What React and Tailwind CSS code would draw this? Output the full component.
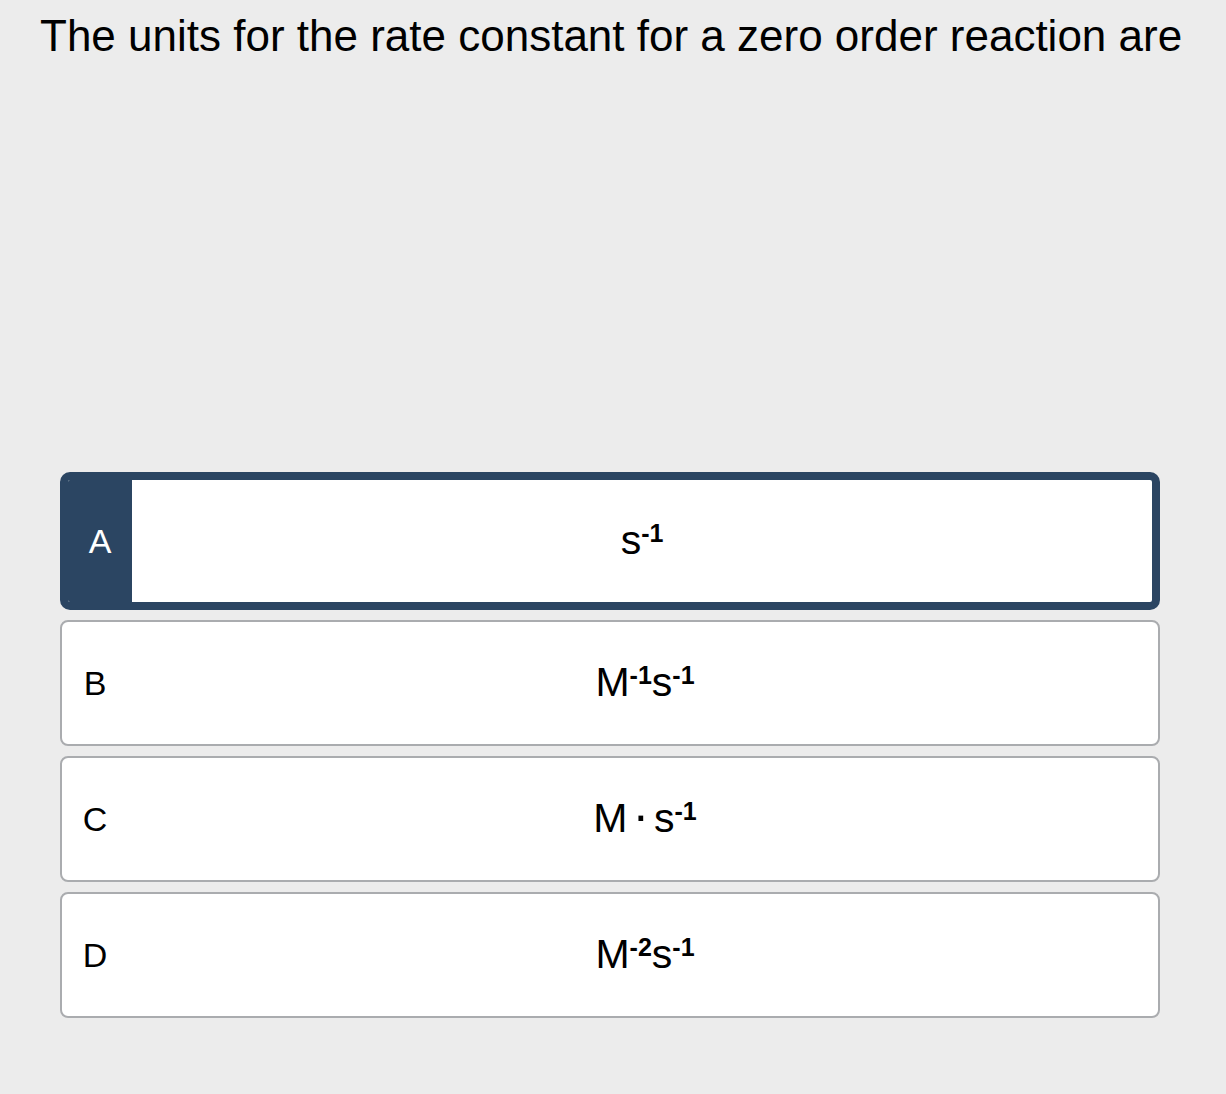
import React from 'react';

const Sup = ({ children }) => <sup className="text-[25px] font-bold">{children}</sup>;

const options = [
  { key: 'A', selected: true, value: <>s<Sup>-1</Sup></> },
  { key: 'B', value: <>M<Sup>-1</Sup>s<Sup>-1</Sup></> },
  { key: 'C', value: <>M<span className="mx-[5px] text-[50px] leading-none">·</span>s<Sup>-1</Sup></> },
  { key: 'D', value: <>M<Sup>-2</Sup>s<Sup>-1</Sup></> },
];

const Option = ({ option }) => {
  if (option.selected) {
    return (
      <div className="flex h-[138px] rounded-[10px] border-[8px] border-[#2b4562] bg-white overflow-hidden">
        <div className="w-[64px] bg-[#2b4562] flex items-center justify-center text-white text-[34px]">
          {option.key}
        </div>
        <div className="flex-1 flex items-center justify-center text-[41px] text-black">
          <span>{option.value}</span>
        </div>
      </div>
    );
  }
  return (
    <div className="flex h-[126px] rounded-[8px] border-[2px] border-[#aaacaf] bg-white">
      <div className="w-[66px] flex items-center justify-center text-black text-[34px]">
        {option.key}
      </div>
      <div className="flex-1 flex items-center justify-center text-[41px] text-black pl-[4px]">
        <span>{option.value}</span>
      </div>
    </div>
  );
};

export default function App() {
  return (
    <div className="min-h-screen bg-[#ececec] font-['Liberation_Sans',Arial,sans-serif]">
      <h1 className="pl-[40px] pt-[14px] text-[44px] leading-none text-black">
        The units for the rate constant for a zero order reaction are
      </h1>
      <div className="ml-[60px] mt-[414px] w-[1100px] flex flex-col gap-[10px]">
        {options.map((option) => (
          <Option key={option.key} option={option} />
        ))}
      </div>
    </div>
  );
}
